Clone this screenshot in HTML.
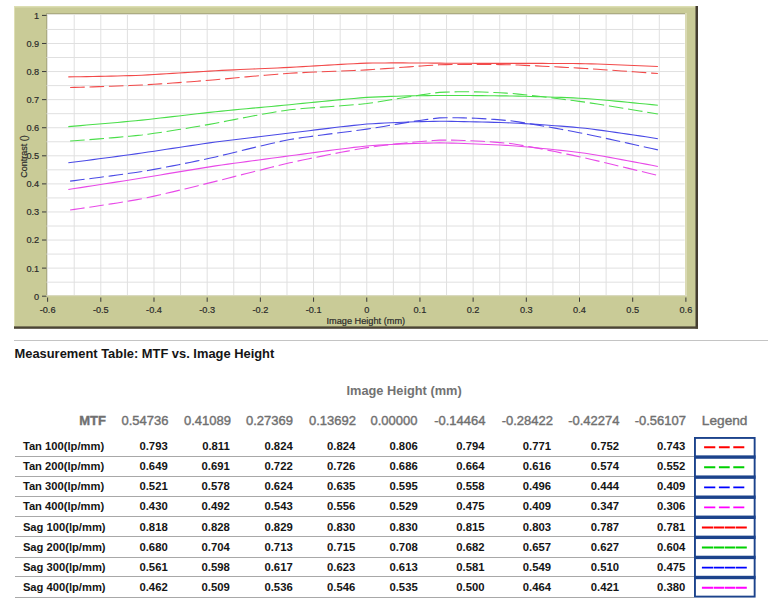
<!DOCTYPE html>
<html><head><meta charset="utf-8"><style>
html,body{margin:0;padding:0;background:#fff;width:768px;height:603px;overflow:hidden;position:relative;font-family:"Liberation Sans",sans-serif;}
.hr{position:absolute;left:14px;right:0;top:339.5px;height:1px;background:#c4c4c4;}
.title{position:absolute;left:14.5px;top:346.4px;font-size:12.9px;font-weight:bold;color:#151515;white-space:nowrap;line-height:15px;}
.ih{position:absolute;left:346.5px;top:382.9px;font-size:12.8px;font-weight:bold;color:#727272;white-space:nowrap;line-height:15px;}
.hd{position:absolute;top:413px;font-size:13px;color:#707070;-webkit-text-stroke:0.4px #707070;white-space:nowrap;line-height:15px;}
.hd.b{font-weight:bold;}
.lgd{font-size:13.7px;top:413px;}
.cell{position:absolute;font-size:11.3px;font-weight:bold;color:#151515;white-space:nowrap;line-height:13px;}
.lbl{font-size:11.2px;}
.rl{position:absolute;left:15px;width:679px;height:1px;background:#a8a8a8;}
.lg{position:absolute;left:694px;width:61.5px;box-sizing:border-box;border:2px solid #1c438c;background:#fff;}
</style></head><body>
<svg width="768" height="340" style="position:absolute;left:0;top:0"><rect x="14" y="6" width="683" height="322" fill="#c9cb97"/><rect x="14" y="6" width="683" height="1.5" fill="#dcdeb2"/><rect x="14" y="6" width="1" height="320" fill="#dedeb4"/><rect x="695.5" y="6" width="2.5" height="322.5" fill="#433c30"/><rect x="14" y="326.4" width="684" height="2.4" fill="#4a4434"/><rect x="46" y="13" width="639" height="282" fill="#ffffff"/><rect x="46" y="13" width="639" height="1.3" fill="#acac82"/><rect x="46" y="13" width="1" height="282" fill="#acac82"/><rect x="47" y="14" width="638" height="1" fill="#e4e4dc"/><rect x="47" y="14" width="1" height="281" fill="#e4e4dc"/><rect x="685" y="13" width="2" height="283" fill="#dadab4"/><rect x="46" y="295" width="641" height="1.2" fill="#d9d9bf"/><path d="M74.21,14.5V295.0M100.80,14.5V295.0M127.40,14.5V295.0M153.99,14.5V295.0M180.59,14.5V295.0M207.18,14.5V295.0M233.78,14.5V295.0M260.37,14.5V295.0M286.97,14.5V295.0M313.56,14.5V295.0M340.16,14.5V295.0M366.75,14.5V295.0M393.35,14.5V295.0M419.94,14.5V295.0M446.54,14.5V295.0M473.13,14.5V295.0M499.73,14.5V295.0M526.32,14.5V295.0M552.92,14.5V295.0M579.51,14.5V295.0M606.11,14.5V295.0M632.70,14.5V295.0M659.30,14.5V295.0M46.5,282.16H684.7M46.5,268.12H684.7M46.5,254.08H684.7M46.5,240.04H684.7M46.5,226.00H684.7M46.5,211.96H684.7M46.5,197.92H684.7M46.5,183.88H684.7M46.5,169.84H684.7M46.5,155.80H684.7M46.5,141.76H684.7M46.5,127.72H684.7M46.5,113.68H684.7M46.5,99.64H684.7M46.5,85.60H684.7M46.5,71.56H684.7M46.5,57.52H684.7M46.5,43.48H684.7M46.5,29.44H684.7" stroke="#e0e0e0" stroke-width="1" fill="none"/><path d="M42.0,296.20H46.5M42.0,268.12H46.5M42.0,240.04H46.5M42.0,211.96H46.5M42.0,183.88H46.5M42.0,155.80H46.5M42.0,127.72H46.5M42.0,99.64H46.5M42.0,71.56H46.5M42.0,43.48H46.5M42.0,15.40H46.5M47.61,297.5V301.8M100.80,297.5V301.8M153.99,297.5V301.8M207.18,297.5V301.8M260.37,297.5V301.8M313.56,297.5V301.8M366.75,297.5V301.8M419.94,297.5V301.8M473.13,297.5V301.8M526.32,297.5V301.8M579.51,297.5V301.8M632.70,297.5V301.8M685.89,297.5V301.8" stroke="#3a3a3a" stroke-width="1" fill="none"/><g font-family="Liberation Sans" font-size="9.2" fill="#2a2a2a" stroke="#2a2a2a" stroke-width="0.18"><text x="39.2" y="299.6" text-anchor="end">0</text><text x="39.2" y="271.5" text-anchor="end">0.1</text><text x="39.2" y="243.4" text-anchor="end">0.2</text><text x="39.2" y="215.4" text-anchor="end">0.3</text><text x="39.2" y="187.3" text-anchor="end">0.4</text><text x="39.2" y="159.2" text-anchor="end">0.5</text><text x="39.2" y="131.1" text-anchor="end">0.6</text><text x="39.2" y="103.0" text-anchor="end">0.7</text><text x="39.2" y="75.0" text-anchor="end">0.8</text><text x="39.2" y="46.9" text-anchor="end">0.9</text><text x="39.2" y="18.8" text-anchor="end">1</text><text x="47.6" y="313.4" text-anchor="middle">-0.6</text><text x="100.8" y="313.4" text-anchor="middle">-0.5</text><text x="154.0" y="313.4" text-anchor="middle">-0.4</text><text x="207.2" y="313.4" text-anchor="middle">-0.3</text><text x="260.4" y="313.4" text-anchor="middle">-0.2</text><text x="313.6" y="313.4" text-anchor="middle">-0.1</text><text x="366.8" y="313.4" text-anchor="middle">0</text><text x="419.9" y="313.4" text-anchor="middle">0.1</text><text x="473.1" y="313.4" text-anchor="middle">0.2</text><text x="526.3" y="313.4" text-anchor="middle">0.3</text><text x="579.5" y="313.4" text-anchor="middle">0.4</text><text x="632.7" y="313.4" text-anchor="middle">0.5</text><text x="685.9" y="313.4" text-anchor="middle">0.6</text></g><text x="365.8" y="323.8" font-family="Liberation Sans" font-size="9.2" fill="#2a2a2a" stroke="#2a2a2a" stroke-width="0.2" text-anchor="middle">Image Height (mm)</text><text transform="translate(27,156.5) rotate(-90)" font-family="Liberation Sans" font-size="9" fill="#2a2a2a" stroke="#2a2a2a" stroke-width="0.2" text-anchor="middle">Contrast ()</text><path d="M68.32,87.57L74.45,87.38L80.58,87.20L86.71,87.02L92.84,86.83L98.97,86.64L105.11,86.44L111.24,86.23L117.37,86.01L123.50,85.79L129.63,85.55L135.76,85.30L141.89,85.04L148.03,84.67L154.17,84.28L160.31,83.88L166.45,83.47L172.59,83.04L178.73,82.60L184.87,82.14L191.01,81.68L197.15,81.20L203.29,80.71L209.43,80.21L215.57,79.70L221.76,79.14L227.95,78.58L234.13,78.00L240.32,77.43L246.51,76.86L252.69,76.30L258.88,75.75L265.07,75.21L271.26,74.69L277.44,74.18L283.63,73.70L289.82,73.24L296.23,72.91L302.64,72.61L309.05,72.32L315.46,72.06L321.87,71.80L328.28,71.55L334.69,71.30L341.11,71.04L347.52,70.78L353.93,70.50L360.34,70.20L366.75,69.88L372.82,69.48L378.89,69.06L384.96,68.63L391.03,68.18L397.09,67.73L403.16,67.28L409.23,66.83L415.30,66.39L421.37,65.96L427.44,65.55L433.51,65.17L439.58,64.82L445.64,64.67L451.70,64.56L457.76,64.47L463.83,64.42L469.89,64.39L475.95,64.39L482.01,64.41L488.08,64.46L494.14,64.52L500.20,64.61L506.26,64.71L512.33,64.82L518.41,65.07L524.49,65.33L530.57,65.60L536.65,65.88L542.73,66.18L548.81,66.48L554.90,66.79L560.98,67.11L567.06,67.44L573.14,67.78L579.22,68.12L585.30,68.47L591.35,68.87L597.40,69.28L603.45,69.69L609.50,70.10L615.55,70.52L621.60,70.95L627.65,71.37L633.69,71.80L639.74,72.23L645.79,72.66L651.84,73.09L657.89,73.53" stroke="#f24a4a" stroke-width="1.1" fill="none" stroke-dasharray="14.6,4.8" stroke-dashoffset="17.6"/><path d="M68.32,141.20L74.45,140.74L80.58,140.29L86.71,139.82L92.84,139.35L98.97,138.87L105.11,138.38L111.24,137.87L117.37,137.35L123.50,136.80L129.63,136.23L135.76,135.64L141.89,135.02L148.03,134.18L154.17,133.32L160.31,132.42L166.45,131.50L172.59,130.55L178.73,129.57L184.87,128.57L191.01,127.55L197.15,126.50L203.29,125.43L209.43,124.34L215.57,123.23L221.76,122.03L227.95,120.83L234.13,119.62L240.32,118.41L246.51,117.22L252.69,116.04L258.88,114.88L265.07,113.76L271.26,112.68L277.44,111.64L283.63,110.67L289.82,109.75L296.23,109.13L302.64,108.57L309.05,108.06L315.46,107.59L321.87,107.14L328.28,106.71L334.69,106.26L341.11,105.81L347.52,105.32L353.93,104.80L360.34,104.22L366.75,103.57L372.82,102.71L378.89,101.79L384.96,100.82L391.03,99.83L397.09,98.81L403.16,97.79L409.23,96.78L415.30,95.79L421.37,94.84L427.44,93.94L433.51,93.10L439.58,92.34L445.64,92.08L451.70,91.90L457.76,91.79L463.83,91.77L469.89,91.80L475.95,91.90L482.01,92.06L488.08,92.26L494.14,92.51L500.20,92.80L506.26,93.12L512.33,93.46L518.41,94.08L524.49,94.73L530.57,95.39L536.65,96.07L542.73,96.77L548.81,97.49L554.90,98.23L560.98,98.99L567.06,99.76L573.14,100.55L579.22,101.35L585.30,102.17L591.35,103.10L597.40,104.05L603.45,105.00L609.50,105.97L615.55,106.95L621.60,107.94L627.65,108.93L633.69,109.93L639.74,110.93L645.79,111.94L651.84,112.95L657.89,113.96" stroke="#4ade4a" stroke-width="1.1" fill="none" stroke-dasharray="14.6,4.8" stroke-dashoffset="17.6"/><path d="M68.32,181.35L74.45,180.58L80.58,179.80L86.71,179.03L92.84,178.24L98.97,177.45L105.11,176.65L111.24,175.83L117.37,175.01L123.50,174.16L129.63,173.30L135.76,172.42L141.89,171.52L148.03,170.44L154.17,169.34L160.31,168.21L166.45,167.05L172.59,165.88L178.73,164.67L184.87,163.45L191.01,162.19L197.15,160.91L203.29,159.61L209.43,158.28L215.57,156.92L221.76,155.44L227.95,153.94L234.13,152.42L240.32,150.90L246.51,149.39L252.69,147.88L258.88,146.40L265.07,144.94L271.26,143.51L277.44,142.13L283.63,140.79L289.82,139.51L296.23,138.51L302.64,137.56L309.05,136.67L315.46,135.81L321.87,134.98L328.28,134.17L334.69,133.36L341.11,132.56L347.52,131.74L353.93,130.91L360.34,130.04L366.75,129.12L372.82,128.17L378.89,127.18L384.96,126.17L391.03,125.14L397.09,124.11L403.16,123.10L409.23,122.11L415.30,121.15L421.37,120.24L427.44,119.38L433.51,118.60L439.58,117.89L445.64,117.76L451.70,117.71L457.76,117.74L463.83,117.85L469.89,118.04L475.95,118.29L482.01,118.61L488.08,118.98L494.14,119.41L500.20,119.89L506.26,120.42L512.33,120.98L518.41,121.91L524.49,122.87L530.57,123.87L536.65,124.89L542.73,125.94L548.81,127.02L554.90,128.12L560.98,129.24L567.06,130.38L573.14,131.54L579.22,132.71L585.30,133.90L591.35,135.19L597.40,136.50L603.45,137.81L609.50,139.14L615.55,140.47L621.60,141.80L627.65,143.14L633.69,144.49L639.74,145.84L645.79,147.19L651.84,148.55L657.89,149.90" stroke="#4a4ae6" stroke-width="1.1" fill="none" stroke-dasharray="14.6,4.8" stroke-dashoffset="17.6"/><path d="M68.32,210.28L74.45,209.39L80.58,208.50L86.71,207.60L92.84,206.70L98.97,205.78L105.11,204.85L111.24,203.89L117.37,202.92L123.50,201.93L129.63,200.90L135.76,199.85L141.89,198.76L148.03,197.44L154.17,196.09L160.31,194.71L166.45,193.29L172.59,191.86L178.73,190.40L184.87,188.92L191.01,187.43L197.15,185.92L203.29,184.40L209.43,182.88L215.57,181.35L221.76,179.78L227.95,178.20L234.13,176.63L240.32,175.06L246.51,173.50L252.69,171.94L258.88,170.39L265.07,168.85L271.26,167.32L277.44,165.81L283.63,164.30L289.82,162.82L296.23,161.44L302.64,160.07L309.05,158.73L315.46,157.40L321.87,156.10L328.28,154.82L334.69,153.57L341.11,152.33L347.52,151.13L353.93,149.94L360.34,148.79L366.75,147.66L372.82,146.84L378.89,146.05L384.96,145.28L391.03,144.55L397.09,143.85L403.16,143.19L409.23,142.56L415.30,141.97L421.37,141.43L427.44,140.93L433.51,140.48L439.58,140.08L445.64,140.10L451.70,140.17L457.76,140.29L463.83,140.47L469.89,140.70L475.95,140.97L482.01,141.30L488.08,141.68L494.14,142.12L500.20,142.60L506.26,143.14L512.33,143.73L518.41,144.72L524.49,145.77L530.57,146.86L536.65,147.99L542.73,149.15L548.81,150.35L554.90,151.58L560.98,152.84L567.06,154.12L573.14,155.41L579.22,156.73L585.30,158.05L591.35,159.47L597.40,160.91L603.45,162.35L609.50,163.79L615.55,165.24L621.60,166.69L627.65,168.15L633.69,169.60L639.74,171.07L645.79,172.53L651.84,173.99L657.89,175.46" stroke="#e84ae8" stroke-width="1.1" fill="none" stroke-dasharray="14.6,4.8" stroke-dashoffset="17.6"/><path d="M68.32,76.90L74.45,76.80L80.58,76.70L86.71,76.60L92.84,76.49L98.97,76.37L105.11,76.25L111.24,76.11L117.37,75.96L123.50,75.80L129.63,75.62L135.76,75.43L141.89,75.21L148.03,74.88L154.17,74.53L160.31,74.16L166.45,73.79L172.59,73.40L178.73,73.01L184.87,72.62L191.01,72.22L197.15,71.83L203.29,71.45L209.43,71.08L215.57,70.72L221.76,70.41L227.95,70.12L234.13,69.83L240.32,69.56L246.51,69.29L252.69,69.03L258.88,68.76L265.07,68.50L271.26,68.22L277.44,67.94L283.63,67.65L289.82,67.35L296.23,66.99L302.64,66.62L309.05,66.25L315.46,65.86L321.87,65.48L328.28,65.10L334.69,64.73L341.11,64.37L347.52,64.03L353.93,63.70L360.34,63.41L366.75,63.14L372.82,63.04L378.89,62.98L384.96,62.93L391.03,62.91L397.09,62.90L403.16,62.92L409.23,62.94L415.30,62.97L421.37,63.01L427.44,63.05L433.51,63.09L439.58,63.14L445.64,63.18L451.70,63.22L457.76,63.26L463.83,63.29L469.89,63.32L475.95,63.35L482.01,63.37L488.08,63.38L494.14,63.40L500.20,63.41L506.26,63.41L512.33,63.42L518.41,63.42L524.49,63.42L530.57,63.42L536.65,63.42L542.73,63.42L548.81,63.43L554.90,63.45L560.98,63.48L567.06,63.51L573.14,63.56L579.22,63.62L585.30,63.70L591.35,63.87L597.40,64.06L603.45,64.27L609.50,64.49L615.55,64.72L621.60,64.95L627.65,65.20L633.69,65.45L639.74,65.71L645.79,65.97L651.84,66.24L657.89,66.51" stroke="#f24a4a" stroke-width="1.1" fill="none"/><path d="M68.32,126.60L74.45,126.09L80.58,125.58L86.71,125.07L92.84,124.56L98.97,124.04L105.11,123.51L111.24,122.98L117.37,122.44L123.50,121.88L129.63,121.31L135.76,120.73L141.89,120.14L148.03,119.46L154.17,118.77L160.31,118.07L166.45,117.36L172.59,116.64L178.73,115.93L184.87,115.21L191.01,114.49L197.15,113.78L203.29,113.08L209.43,112.39L215.57,111.71L221.76,111.10L227.95,110.49L234.13,109.90L240.32,109.32L246.51,108.74L252.69,108.17L258.88,107.60L265.07,107.03L271.26,106.46L277.44,105.88L283.63,105.29L289.82,104.69L296.23,104.06L302.64,103.42L309.05,102.78L315.46,102.13L321.87,101.49L328.28,100.85L334.69,100.22L341.11,99.61L347.52,99.02L353.93,98.45L360.34,97.91L366.75,97.39L372.82,97.11L378.89,96.85L384.96,96.62L391.03,96.41L397.09,96.23L403.16,96.07L409.23,95.92L415.30,95.80L421.37,95.69L427.44,95.59L433.51,95.51L439.58,95.43L445.64,95.44L451.70,95.46L457.76,95.49L463.83,95.52L469.89,95.56L475.95,95.61L482.01,95.66L488.08,95.72L494.14,95.78L500.20,95.84L506.26,95.91L512.33,95.99L518.41,96.13L524.49,96.29L530.57,96.44L536.65,96.61L542.73,96.79L548.81,96.99L554.90,97.19L560.98,97.42L567.06,97.66L573.14,97.92L579.22,98.21L585.30,98.52L591.35,98.99L597.40,99.49L603.45,100.00L609.50,100.54L615.55,101.09L621.60,101.66L627.65,102.24L633.69,102.83L639.74,103.43L645.79,104.03L651.84,104.64L657.89,105.26" stroke="#4ade4a" stroke-width="1.1" fill="none"/><path d="M68.32,162.82L74.45,162.02L80.58,161.23L86.71,160.43L92.84,159.63L98.97,158.82L105.11,158.01L111.24,157.19L117.37,156.37L123.50,155.54L129.63,154.70L135.76,153.85L141.89,152.99L148.03,152.08L154.17,151.17L160.31,150.24L166.45,149.31L172.59,148.38L178.73,147.45L184.87,146.53L191.01,145.61L197.15,144.70L203.29,143.80L209.43,142.91L215.57,142.04L221.76,141.25L227.95,140.47L234.13,139.71L240.32,138.96L246.51,138.22L252.69,137.48L258.88,136.75L265.07,136.02L271.26,135.29L277.44,134.55L283.63,133.81L289.82,133.06L296.23,132.28L302.64,131.49L309.05,130.70L315.46,129.90L321.87,129.12L328.28,128.34L334.69,127.57L341.11,126.82L347.52,126.09L353.93,125.39L360.34,124.71L366.75,124.07L372.82,123.68L378.89,123.33L384.96,123.01L391.03,122.72L397.09,122.45L403.16,122.21L409.23,122.00L415.30,121.81L421.37,121.64L427.44,121.50L433.51,121.37L439.58,121.26L445.64,121.32L451.70,121.40L457.76,121.49L463.83,121.59L469.89,121.71L475.95,121.85L482.01,122.00L488.08,122.17L494.14,122.34L500.20,122.53L506.26,122.73L512.33,122.95L518.41,123.29L524.49,123.65L530.57,124.03L536.65,124.42L542.73,124.82L548.81,125.25L554.90,125.70L560.98,126.16L567.06,126.65L573.14,127.17L579.22,127.71L585.30,128.28L591.35,129.05L597.40,129.84L603.45,130.65L609.50,131.49L615.55,132.34L621.60,133.22L627.65,134.10L633.69,135.00L639.74,135.91L645.79,136.83L651.84,137.75L657.89,138.67" stroke="#4a4ae6" stroke-width="1.1" fill="none"/><path d="M68.32,189.50L74.45,188.55L80.58,187.61L86.71,186.66L92.84,185.71L98.97,184.76L105.11,183.81L111.24,182.85L117.37,181.89L123.50,180.92L129.63,179.95L135.76,178.97L141.89,177.98L148.03,176.97L154.17,175.95L160.31,174.93L166.45,173.91L172.59,172.88L178.73,171.86L184.87,170.85L191.01,169.84L197.15,168.84L203.29,167.85L209.43,166.87L215.57,165.91L221.76,165.02L227.95,164.16L234.13,163.30L240.32,162.45L246.51,161.62L252.69,160.78L258.88,159.96L265.07,159.13L271.26,158.30L277.44,157.48L283.63,156.64L289.82,155.80L296.23,154.94L302.64,154.08L309.05,153.21L315.46,152.34L321.87,151.48L328.28,150.63L334.69,149.80L341.11,148.98L347.52,148.19L353.93,147.42L360.34,146.68L366.75,145.97L372.82,145.55L378.89,145.15L384.96,144.79L391.03,144.47L397.09,144.17L403.16,143.90L409.23,143.66L415.30,143.45L421.37,143.27L427.44,143.12L433.51,142.99L439.58,142.88L445.64,143.00L451.70,143.14L457.76,143.31L463.83,143.49L469.89,143.70L475.95,143.93L482.01,144.18L488.08,144.44L494.14,144.73L500.20,145.03L506.26,145.35L512.33,145.69L518.41,146.20L524.49,146.74L530.57,147.28L536.65,147.85L542.73,148.44L548.81,149.05L554.90,149.69L560.98,150.35L567.06,151.04L573.14,151.75L579.22,152.50L585.30,153.27L591.35,154.26L597.40,155.28L603.45,156.33L609.50,157.39L615.55,158.48L621.60,159.59L627.65,160.71L633.69,161.85L639.74,162.99L645.79,164.15L651.84,165.31L657.89,166.47" stroke="#e84ae8" stroke-width="1.1" fill="none"/></svg>
<div class="hr"></div>
<div class="title">Measurement Table: MTF vs. Image Height</div>
<div class="ih">Image Height (mm)</div>
<div class="hd b" style="right:662.0px">MTF</div>
<div class="hd" style="right:599.5px">0.54736</div>
<div class="hd" style="right:537.0px">0.41089</div>
<div class="hd" style="right:475.0px">0.27369</div>
<div class="hd" style="right:412.0px">0.13692</div>
<div class="hd" style="right:350.5px">0.00000</div>
<div class="hd" style="right:282.5px">-0.14464</div>
<div class="hd" style="right:215.0px">-0.28422</div>
<div class="hd" style="right:148.5px">-0.42274</div>
<div class="hd" style="right:82.0px">-0.56107</div>
<div class="hd lgd" style="left:701.8px">Legend</div>
<div class="cell lbl" style="left:22.9px;top:440.0px">Tan 100(lp/mm)</div>
<div class="cell" style="right:600.3px;top:440.0px">0.793</div>
<div class="cell" style="right:538.2px;top:440.0px">0.811</div>
<div class="cell" style="right:475.3px;top:440.0px">0.824</div>
<div class="cell" style="right:412.7px;top:440.0px">0.824</div>
<div class="cell" style="right:350.3px;top:440.0px">0.806</div>
<div class="cell" style="right:283.5px;top:440.0px">0.794</div>
<div class="cell" style="right:216.9px;top:440.0px">0.771</div>
<div class="cell" style="right:149.0px;top:440.0px">0.752</div>
<div class="cell" style="right:82.7px;top:440.0px">0.743</div>
<div class="rl" style="top:456px"></div>
<div class="cell lbl" style="left:22.9px;top:460.0px">Tan 200(lp/mm)</div>
<div class="cell" style="right:600.3px;top:460.0px">0.649</div>
<div class="cell" style="right:538.2px;top:460.0px">0.691</div>
<div class="cell" style="right:475.3px;top:460.0px">0.722</div>
<div class="cell" style="right:412.7px;top:460.0px">0.726</div>
<div class="cell" style="right:350.3px;top:460.0px">0.686</div>
<div class="cell" style="right:283.5px;top:460.0px">0.664</div>
<div class="cell" style="right:216.9px;top:460.0px">0.616</div>
<div class="cell" style="right:149.0px;top:460.0px">0.574</div>
<div class="cell" style="right:82.7px;top:460.0px">0.552</div>
<div class="rl" style="top:476px"></div>
<div class="cell lbl" style="left:22.9px;top:480.0px">Tan 300(lp/mm)</div>
<div class="cell" style="right:600.3px;top:480.0px">0.521</div>
<div class="cell" style="right:538.2px;top:480.0px">0.578</div>
<div class="cell" style="right:475.3px;top:480.0px">0.624</div>
<div class="cell" style="right:412.7px;top:480.0px">0.635</div>
<div class="cell" style="right:350.3px;top:480.0px">0.595</div>
<div class="cell" style="right:283.5px;top:480.0px">0.558</div>
<div class="cell" style="right:216.9px;top:480.0px">0.496</div>
<div class="cell" style="right:149.0px;top:480.0px">0.444</div>
<div class="cell" style="right:82.7px;top:480.0px">0.409</div>
<div class="rl" style="top:496px"></div>
<div class="cell lbl" style="left:22.9px;top:500.0px">Tan 400(lp/mm)</div>
<div class="cell" style="right:600.3px;top:500.0px">0.430</div>
<div class="cell" style="right:538.2px;top:500.0px">0.492</div>
<div class="cell" style="right:475.3px;top:500.0px">0.543</div>
<div class="cell" style="right:412.7px;top:500.0px">0.556</div>
<div class="cell" style="right:350.3px;top:500.0px">0.529</div>
<div class="cell" style="right:283.5px;top:500.0px">0.475</div>
<div class="cell" style="right:216.9px;top:500.0px">0.409</div>
<div class="cell" style="right:149.0px;top:500.0px">0.347</div>
<div class="cell" style="right:82.7px;top:500.0px">0.306</div>
<div class="rl" style="top:516px"></div>
<div class="cell lbl" style="left:22.9px;top:521.0px">Sag 100(lp/mm)</div>
<div class="cell" style="right:600.3px;top:521.0px">0.818</div>
<div class="cell" style="right:538.2px;top:521.0px">0.828</div>
<div class="cell" style="right:475.3px;top:521.0px">0.829</div>
<div class="cell" style="right:412.7px;top:521.0px">0.830</div>
<div class="cell" style="right:350.3px;top:521.0px">0.830</div>
<div class="cell" style="right:283.5px;top:521.0px">0.815</div>
<div class="cell" style="right:216.9px;top:521.0px">0.803</div>
<div class="cell" style="right:149.0px;top:521.0px">0.787</div>
<div class="cell" style="right:82.7px;top:521.0px">0.781</div>
<div class="rl" style="top:536px"></div>
<div class="cell lbl" style="left:22.9px;top:541.0px">Sag 200(lp/mm)</div>
<div class="cell" style="right:600.3px;top:541.0px">0.680</div>
<div class="cell" style="right:538.2px;top:541.0px">0.704</div>
<div class="cell" style="right:475.3px;top:541.0px">0.713</div>
<div class="cell" style="right:412.7px;top:541.0px">0.715</div>
<div class="cell" style="right:350.3px;top:541.0px">0.708</div>
<div class="cell" style="right:283.5px;top:541.0px">0.682</div>
<div class="cell" style="right:216.9px;top:541.0px">0.657</div>
<div class="cell" style="right:149.0px;top:541.0px">0.627</div>
<div class="cell" style="right:82.7px;top:541.0px">0.604</div>
<div class="rl" style="top:557px"></div>
<div class="cell lbl" style="left:22.9px;top:561.0px">Sag 300(lp/mm)</div>
<div class="cell" style="right:600.3px;top:561.0px">0.561</div>
<div class="cell" style="right:538.2px;top:561.0px">0.598</div>
<div class="cell" style="right:475.3px;top:561.0px">0.617</div>
<div class="cell" style="right:412.7px;top:561.0px">0.623</div>
<div class="cell" style="right:350.3px;top:561.0px">0.613</div>
<div class="cell" style="right:283.5px;top:561.0px">0.581</div>
<div class="cell" style="right:216.9px;top:561.0px">0.549</div>
<div class="cell" style="right:149.0px;top:561.0px">0.510</div>
<div class="cell" style="right:82.7px;top:561.0px">0.475</div>
<div class="rl" style="top:576px"></div>
<div class="cell lbl" style="left:22.9px;top:581.0px">Sag 400(lp/mm)</div>
<div class="cell" style="right:600.3px;top:581.0px">0.462</div>
<div class="cell" style="right:538.2px;top:581.0px">0.509</div>
<div class="cell" style="right:475.3px;top:581.0px">0.536</div>
<div class="cell" style="right:412.7px;top:581.0px">0.546</div>
<div class="cell" style="right:350.3px;top:581.0px">0.535</div>
<div class="cell" style="right:283.5px;top:581.0px">0.500</div>
<div class="cell" style="right:216.9px;top:581.0px">0.464</div>
<div class="cell" style="right:149.0px;top:581.0px">0.421</div>
<div class="cell" style="right:82.7px;top:581.0px">0.380</div>
<div class="rl" style="top:597px"></div>
<svg width="768" height="603" style="position:absolute;left:0;top:0"><rect x="694.95" y="437.95" width="59.7" height="158.66" fill="#fff" stroke="#1c438c" stroke-width="1.9"/><path d="M704.1,447.20H715.3M718.9,447.20H729.7M733.3,447.20H744.3" stroke="#ff0000" stroke-width="1.9"/><rect x="694" y="455.37" width="61.6" height="3.4" fill="#1c438c"/><path d="M704.1,467.27H715.3M718.9,467.27H729.7M733.3,467.27H744.3" stroke="#00d000" stroke-width="1.9"/><rect x="694" y="475.44" width="61.6" height="3.4" fill="#1c438c"/><path d="M704.1,487.34H715.3M718.9,487.34H729.7M733.3,487.34H744.3" stroke="#0000ff" stroke-width="1.9"/><rect x="694" y="495.51" width="61.6" height="3.4" fill="#1c438c"/><path d="M704.1,507.41H715.3M718.9,507.41H729.7M733.3,507.41H744.3" stroke="#ff00ff" stroke-width="1.9"/><rect x="694" y="515.58" width="61.6" height="3.4" fill="#1c438c"/><path d="M701.9,527.48H713M713.6,527.48H724.3M724.9,527.48H735.4M736,527.48H746.8" stroke="#ff0000" stroke-width="1.9"/><rect x="694" y="535.65" width="61.6" height="3.4" fill="#1c438c"/><path d="M701.9,547.55H713M713.6,547.55H724.3M724.9,547.55H735.4M736,547.55H746.8" stroke="#00d000" stroke-width="1.9"/><rect x="694" y="555.72" width="61.6" height="3.4" fill="#1c438c"/><path d="M701.9,567.62H713M713.6,567.62H724.3M724.9,567.62H735.4M736,567.62H746.8" stroke="#0000ff" stroke-width="1.9"/><rect x="694" y="575.79" width="61.6" height="3.4" fill="#1c438c"/><path d="M701.9,587.69H713M713.6,587.69H724.3M724.9,587.69H735.4M736,587.69H746.8" stroke="#ff00ff" stroke-width="1.9"/></svg></body></html>
